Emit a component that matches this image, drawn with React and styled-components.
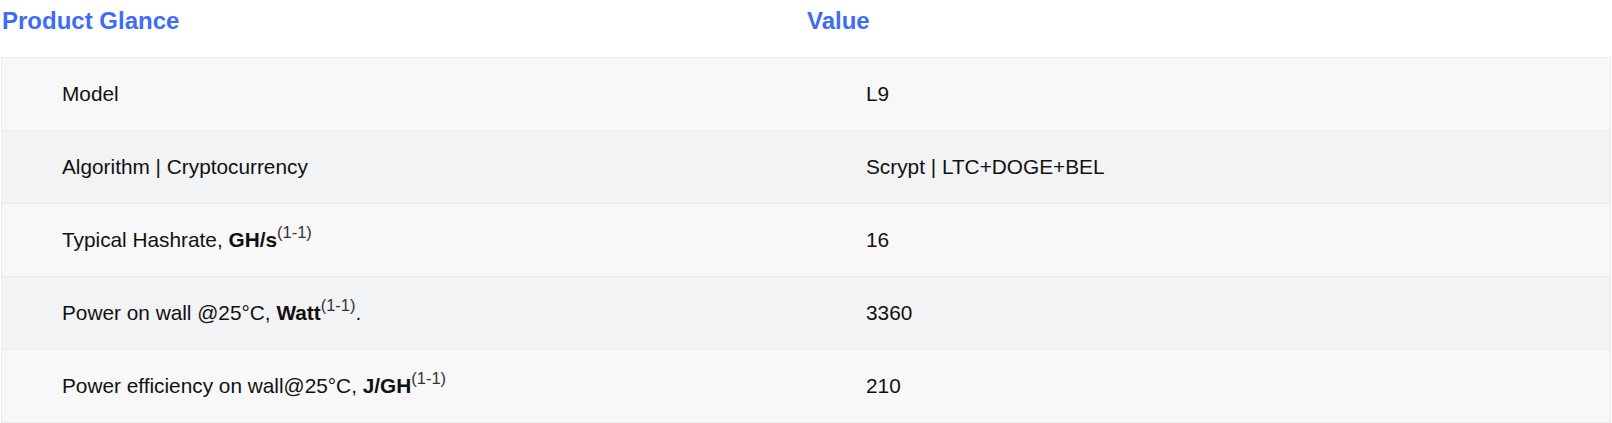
import React from "react";
import styled, { createGlobalStyle } from "styled-components";

const Global = createGlobalStyle`
  html, body { margin: 0; padding: 0; background: #fff; }
  body { font-family: "Liberation Sans", Arial, sans-serif; }
`;

const Wrap = styled.div`
  padding-left: 1px;
  width: 1611px;
  box-sizing: border-box;
`;

const HeadRow = styled.div`
  display: grid;
  grid-template-columns: 805px 1fr;
  height: 58px;
  box-sizing: border-box;
  padding-top: 7px;
  border-bottom: 1px solid #ebebeb;
`;

const HeadCell = styled.div`
  font-size: 24px;
  font-weight: 700;
  color: #3d6df5;
  padding-left: 1px;
  line-height: 28px;
`;

const Body = styled.div`
  border-left: 1px solid #ebebeb;
  border-right: 1px solid #ebebeb;
`;

const Row = styled.div`
  display: grid;
  grid-template-columns: 804px 1fr;
  height: 73px;
  box-sizing: border-box;
  align-items: center;
  border-bottom: 1px solid #ebebeb;
  background: ${(p) => (p.$alt ? "#f2f3f5" : "#f8f8f8")};
`;

const Cell = styled.div`
  font-size: 20.8px;
  color: #111;
  padding-left: 60px;
  line-height: 24px;
  b { font-weight: 700; }
  sup {
    font-size: 16.5px;
    color: #333;
    line-height: 0;
    vertical-align: 9px;
  }
`;

const rows = [
  [<>Model</>, "L9"],
  [<>Algorithm | Cryptocurrency</>, "Scrypt | LTC+DOGE+BEL"],
  [<>Typical Hashrate, <b>GH/s</b><sup>(1-1)</sup></>, "16"],
  [<>Power on wall @25°C, <b>Watt</b><sup>(1-1)</sup>.</>, "3360"],
  [<>Power efficiency on wall@25°C, <b>J/GH</b><sup>(1-1)</sup></>, "210"],
];

export default function App() {
  return (
    <Wrap>
      <Global />
      <HeadRow>
        <HeadCell>Product Glance</HeadCell>
        <HeadCell>Value</HeadCell>
      </HeadRow>
      <Body>
        {rows.map((r, i) => (
          <Row key={i} $alt={i % 2 === 1}>
            <Cell>{r[0]}</Cell>
            <Cell>{r[1]}</Cell>
          </Row>
        ))}
      </Body>
    </Wrap>
  );
}
